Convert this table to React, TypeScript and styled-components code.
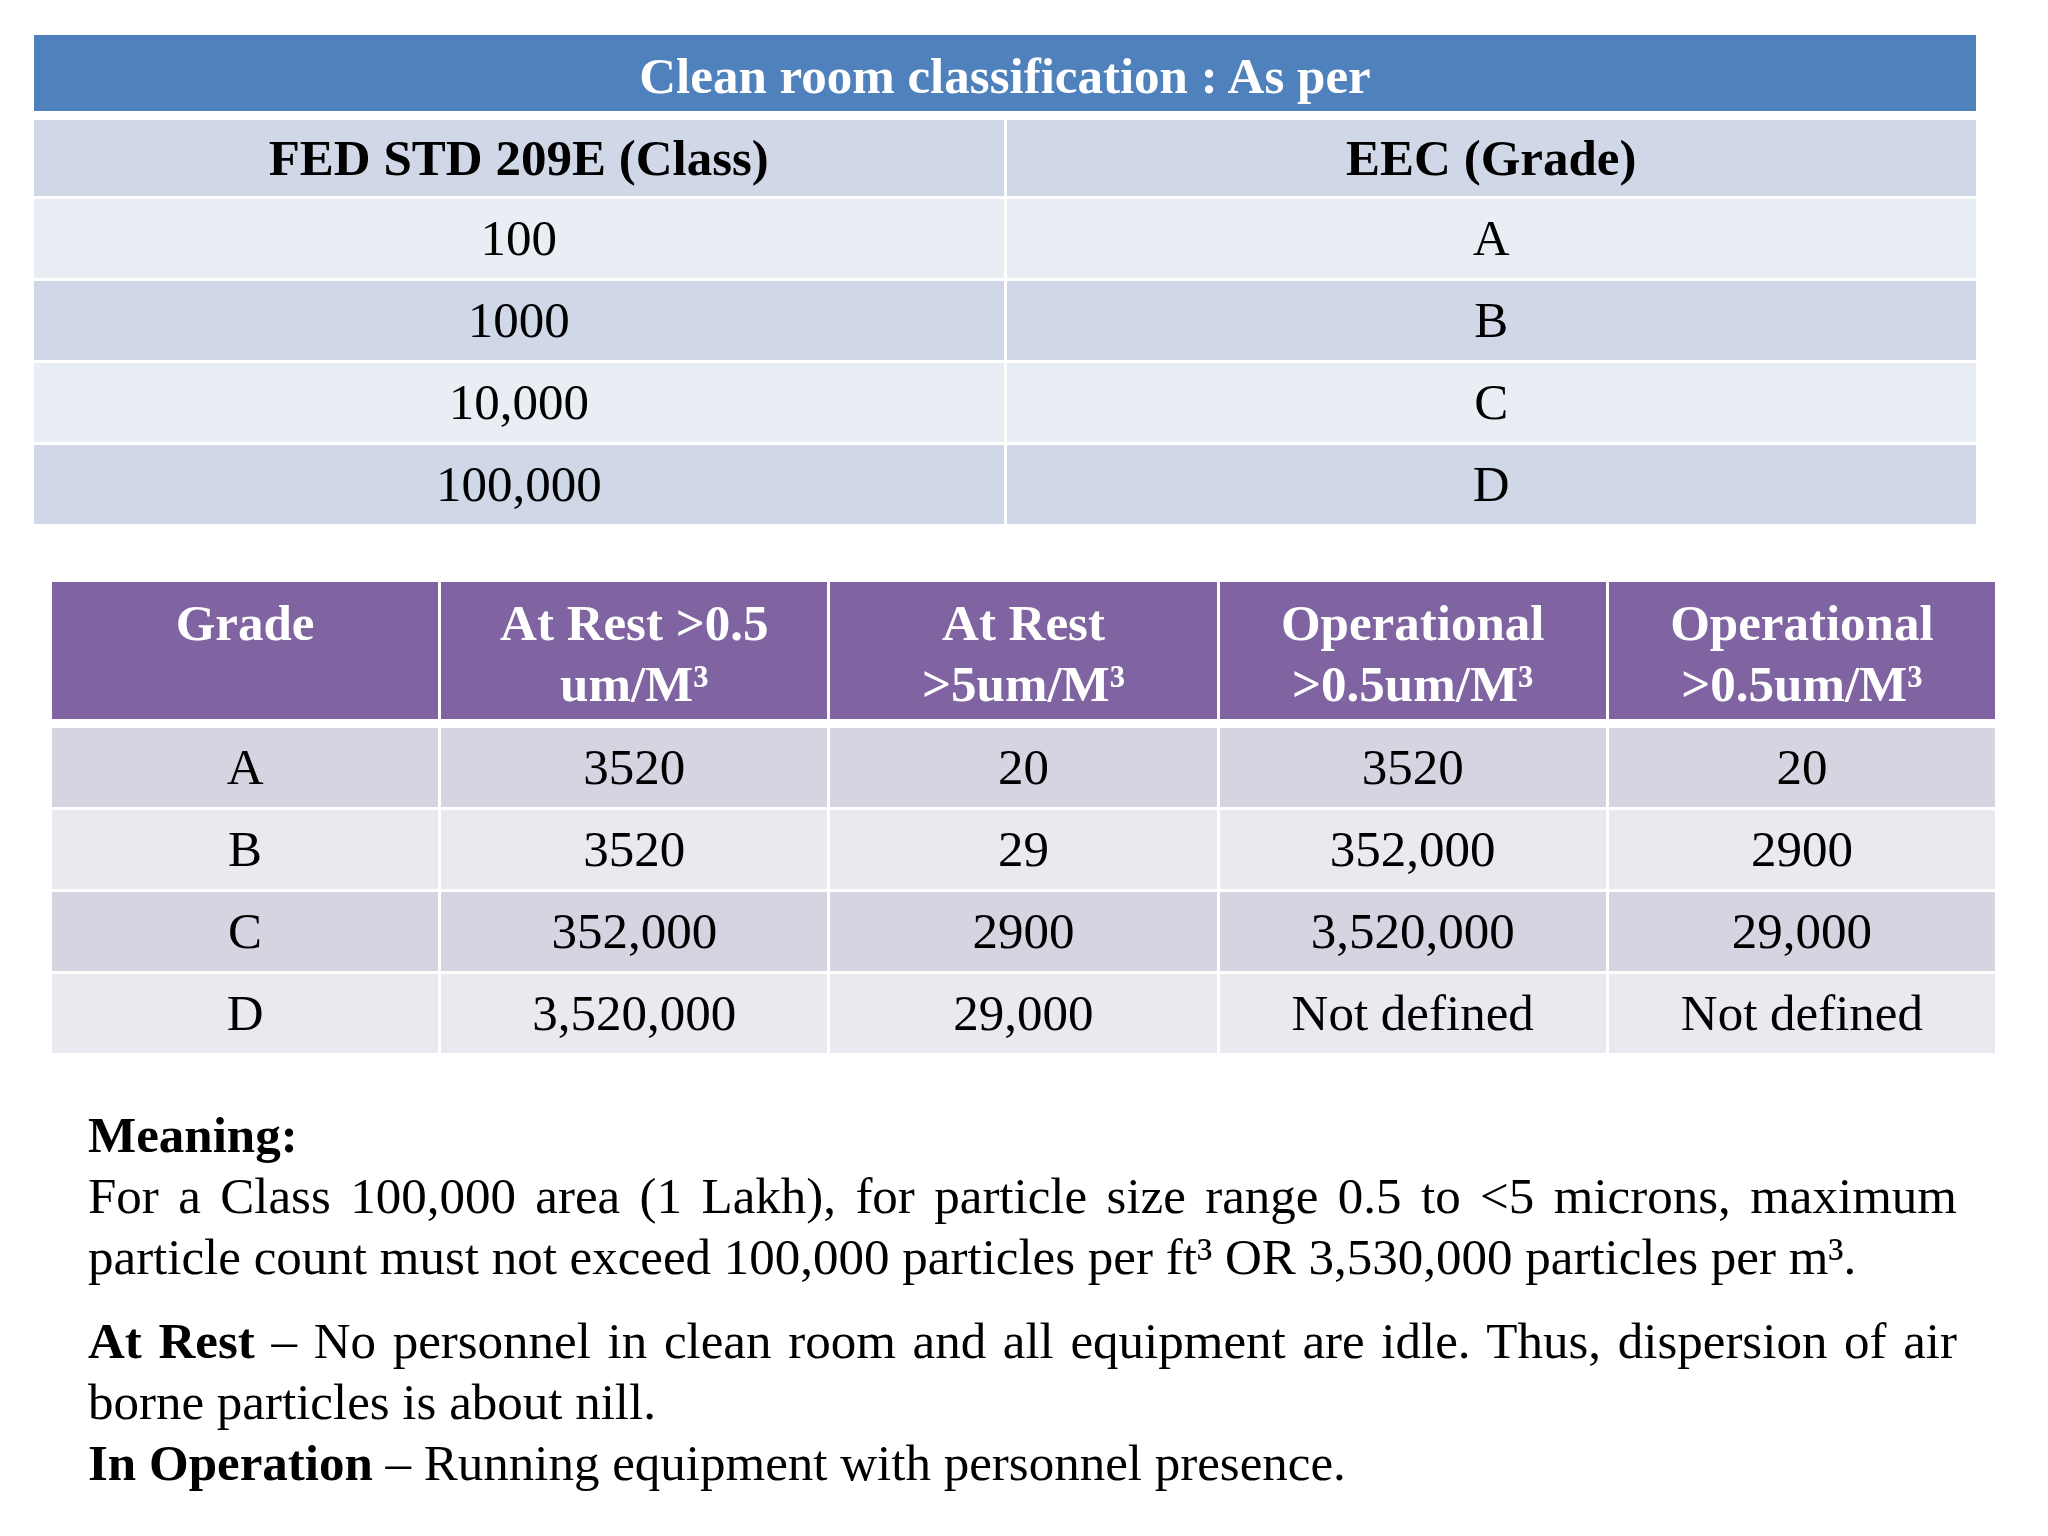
import React from "react";
import styled, { createGlobalStyle } from "styled-components";

const GlobalStyle = createGlobalStyle`
    html,
    body {
        margin: 0;
        padding: 0;
        background: #ffffff;
    }

    body {
        font-family: "Liberation Serif", "Times New Roman", serif;
        color: #000000;
    }
`;

const Page = styled.div`
    width: 2048px;
    height: 1536px;
    box-sizing: border-box;
    padding-top: 35px;
    display: flex;
    flex-direction: column;
    overflow: hidden;
    font-size: 51px;
`;

const StandardTable = styled.div`
    margin-left: 34px;
    width: 1942px;
    display: grid;
    grid-template-columns: 1fr 1fr;
    gap: 3px;
`;

const TitleBar = styled.div`
    grid-column: 1 / -1;
    height: 76px;
    box-sizing: border-box;
    padding-top: 7px;
    margin-bottom: 6px;
    background: #4f81bd;
    color: #ffffff;
    font-weight: 700;
    line-height: 69px;
    text-align: center;
`;

const BlueCell = styled.div<{ $dark?: boolean; $head?: boolean }>`
    height: ${(p) => (p.$head ? "76px" : "79px")};
    background: ${(p) => (p.$dark ? "#d0d8e8" : "#e9edf4")};
    font-weight: ${(p) => (p.$head ? 700 : 400)};
    line-height: ${(p) => (p.$head ? "76px" : "79px")};
    text-align: center;
    white-space: nowrap;
`;

const GradeTable = styled.div`
    margin-top: 58px;
    margin-left: 52px;
    width: 1943px;
    display: grid;
    grid-template-columns: repeat(5, 1fr);
    gap: 3px;
`;

const PurpleHeadCell = styled.div`
    height: 137px;
    box-sizing: border-box;
    padding-top: 11px;
    margin-bottom: 6px;
    background: #8064a2;
    color: #ffffff;
    font-weight: 700;
    line-height: 61px;
    text-align: center;
    white-space: nowrap;
`;

const PurpleCell = styled.div<{ $dark?: boolean }>`
    height: 79px;
    background: ${(p) => (p.$dark ? "#d7d4e1" : "#eae9ef")};
    line-height: 79px;
    text-align: center;
    white-space: nowrap;
`;

const Notes = styled.div`
    margin-top: 52px;
    margin-left: 88px;
    width: 1869px;
    line-height: 61px;
    text-align: justify;
`;

const Para = styled.p<{ $gap?: number }>`
    margin: ${(p) => p.$gap ?? 0}px 0 0;
`;

const standardRows = [
    ["100", "A"],
    ["1000", "B"],
    ["10,000", "C"],
    ["100,000", "D"],
];

const gradeHeads: [string, string][] = [
    ["Grade", ""],
    ["At Rest >0.5", "um/M³"],
    ["At Rest", ">5um/M³"],
    ["Operational", ">0.5um/M³"],
    ["Operational", ">0.5um/M³"],
];

const gradeRows = [
    ["A", "3520", "20", "3520", "20"],
    ["B", "3520", "29", "352,000", "2900"],
    ["C", "352,000", "2900", "3,520,000", "29,000"],
    ["D", "3,520,000", "29,000", "Not defined", "Not defined"],
];

export default function App() {
    return (
        <>
            <GlobalStyle />
            <Page>
                <StandardTable>
                    <TitleBar>Clean room classification : As per</TitleBar>
                    <BlueCell $head $dark>FED STD 209E (Class)</BlueCell>
                    <BlueCell $head $dark>EEC (Grade)</BlueCell>
                    {standardRows.map((row, i) =>
                        row.map((value, j) => (
                            <BlueCell key={`${i}-${j}`} $dark={i % 2 === 1}>
                                {value}
                            </BlueCell>
                        ))
                    )}
                </StandardTable>

                <GradeTable>
                    {gradeHeads.map(([first, second], i) => (
                        <PurpleHeadCell key={i}>
                            {first}
                            {second && (
                                <>
                                    <br />
                                    {second}
                                </>
                            )}
                        </PurpleHeadCell>
                    ))}
                    {gradeRows.map((row, i) =>
                        row.map((value, j) => (
                            <PurpleCell key={`${i}-${j}`} $dark={i % 2 === 0}>
                                {value}
                            </PurpleCell>
                        ))
                    )}
                </GradeTable>

                <Notes>
                    <Para>
                        <b>Meaning:</b>
                        <br />
                        For a Class 100,000 area (1 Lakh), for particle size range 0.5 to &lt;5
                        microns, maximum particle count must not exceed 100,000 particles per ft³
                        OR 3,530,000 particles per m³.
                    </Para>
                    <Para $gap={23}>
                        <b>At Rest</b> – No personnel in clean room and all equipment are idle.
                        Thus, dispersion of air borne particles is about nill.
                    </Para>
                    <Para>
                        <b>In Operation</b> – Running equipment with personnel presence.
                    </Para>
                </Notes>
            </Page>
        </>
    );
}
